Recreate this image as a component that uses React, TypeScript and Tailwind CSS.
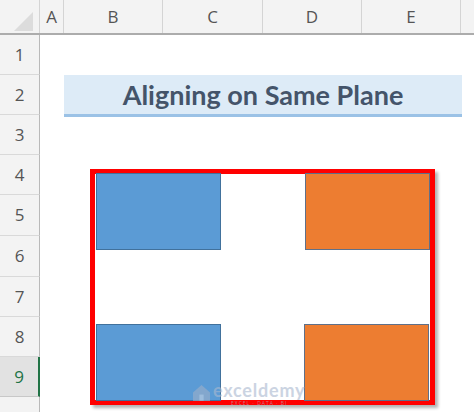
import React from 'react';

const cols = [
  { label: 'A', w: 'w-[24px]' },
  { label: 'B', w: 'w-[99px]' },
  { label: 'C', w: 'w-[100px]' },
  { label: 'D', w: 'w-[99px]' },
  { label: 'E', w: 'w-[99px]' },
];

const rows = [
  { n: 1, h: 'h-[40px]' },
  { n: 2, h: 'h-[40px]' },
  { n: 3, h: 'h-[40px]' },
  { n: 4, h: 'h-[40px]' },
  { n: 5, h: 'h-[41px]' },
  { n: 6, h: 'h-[41px]' },
  { n: 7, h: 'h-[40px]' },
  { n: 8, h: 'h-[40px]' },
  { n: 9, h: 'h-[40px]' },
];

function Shape({ color }: { color: 'blue' | 'orange' }) {
  return (
    <div
      className={
        color === 'blue'
          ? 'w-[125px] h-[77px] bg-[#5b9bd5] border border-[#41719c]'
          : 'w-[125px] h-[77px] bg-[#ed7d31] border border-[#5f7089]'
      }
    />
  );
}

export default function App() {
  return (
    <div className="w-[474px] h-[412px] overflow-hidden bg-white font-['Open_Sans',sans-serif] text-[#555]">
      {/* column headers */}
      <div className="flex h-[35px] bg-[#f3f3f3] border-b-2 border-[#acacac]">
        <div className="w-[40px] border-r border-[#d4d4d4] flex items-end justify-end pr-[6px] pb-[2px]">
          <svg width="19" height="19" viewBox="0 0 19 19">
            <polygon points="19,0 19,19 0,19" fill="#dcdcdc" />
          </svg>
        </div>
        {cols.map((c) => (
          <div
            key={c.label}
            className={`${c.w} border-r border-[#d4d4d4] flex items-center justify-center text-[17px]`}
          >
            {c.label}
          </div>
        ))}
        <div className="flex-1" />
      </div>

      <div className="flex">
        {/* row headers */}
        <div className="w-[40px] flex flex-col">
          {rows.map((r) => (
            <div
              key={r.n}
              className={
                r.n === 9
                  ? `${r.h} bg-[#e2e2e2] border-b border-[#c8c8c8] border-r-2 border-r-[#217346] flex items-center justify-center text-[17px] text-[#217346]`
                  : `${r.h} bg-[#f3f3f3] border-b border-[#d9d9d9] border-r border-r-[#b9b9b9] flex items-center justify-center text-[17px]`
              }
            >
              {r.n}
            </div>
          ))}
          <div className="h-[20px] bg-[#f3f3f3] border-r border-[#b9b9b9]" />
        </div>

        {/* sheet */}
        <div className="relative flex-1 flex flex-col">
          <div className="h-[40px]" />
          <div className="h-[42px] ml-[24px] w-[398px] bg-[#ddebf7] border-b-[3px] border-[#9bc2e6] flex items-center justify-center">
            <span className="font-['Lato',sans-serif] font-bold text-[27px] text-[#44546a] leading-none">
              Aligning on Same Plane
            </span>
          </div>
          <div className="h-[52px]" />
          <div className="ml-[50px] w-[345px] h-[236px] border-[5px] border-[#ff0000] shadow-[3px_3px_3px_rgba(0,0,0,0.3)] bg-white flex flex-col justify-between">
            <div className="flex justify-between pl-[1px] -mt-[1px]">
              <Shape color="blue" />
              <Shape color="orange" />
            </div>
            <div className="flex justify-between pl-[1px] pr-[1px] -mb-[1px]">
              <Shape color="blue" />
              <Shape color="orange" />
            </div>
          </div>

          {/* watermark */}
          <div className="absolute left-[153px] top-[345px] flex items-center gap-[3px] opacity-60">
            <svg width="17" height="16" viewBox="0 0 16 15">
              <polygon points="8,0 16,7 16,15 0,15 0,7" fill="#9fb0c8" />
              <rect x="6" y="9" width="4" height="6" fill="#c9d4e3" />
            </svg>
            <div className="flex flex-col items-center">
              <span className="font-['Lato',sans-serif] font-bold text-[18px] text-[#a9b8cf] tracking-[0.8px] leading-[20px]">
                exceldemy
              </span>
              <span className="text-[5px] leading-[6px] text-[#a9b8cf] tracking-[1px]">
                EXCEL · DATA · BI
              </span>
            </div>
          </div>
        </div>
      </div>
    </div>
  );
}
